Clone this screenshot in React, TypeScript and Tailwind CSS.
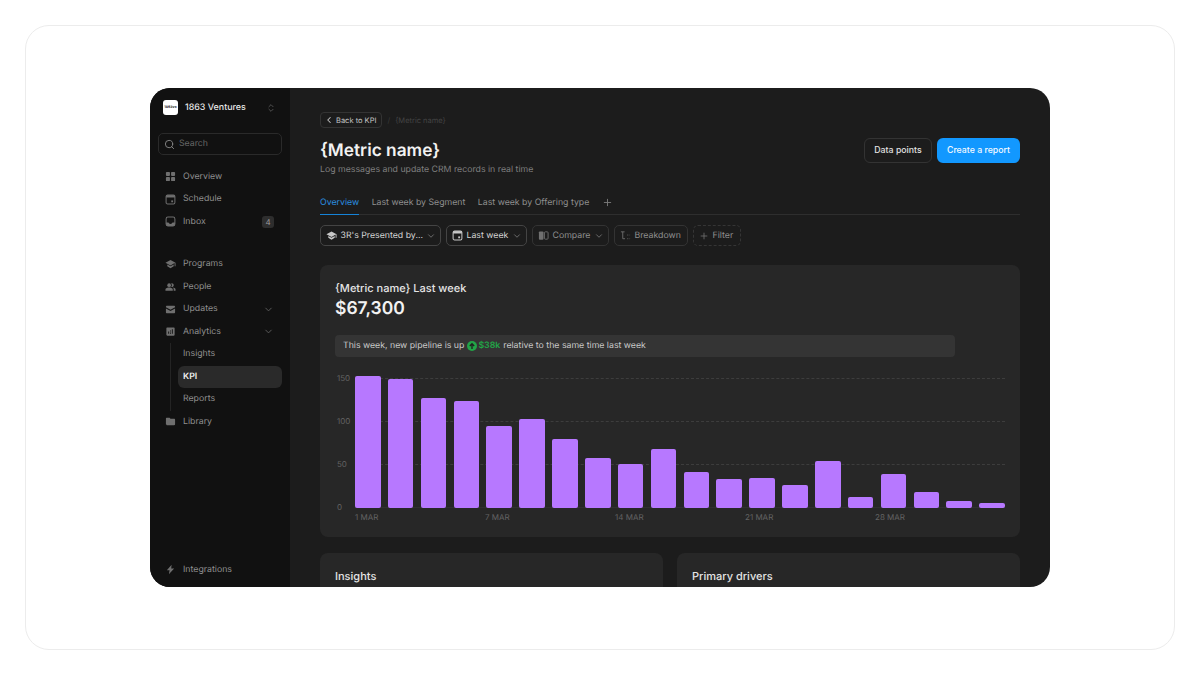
import { ChevronDown, ChevronLeft, ChevronsUpDown, Plus, Search } from "lucide-react";
import type { ReactNode } from "react";
import { MdAnalytics, MdFolder, MdPeopleAlt, MdSchool } from "react-icons/md";

const OverviewIcon = () => (
  <svg viewBox="0 0 12 12" className="h-[11px] w-[11px] fill-current">
    <rect x="1" y="1" width="4.4" height="4.4" rx="1" />
    <rect x="6.6" y="1" width="4.4" height="4.4" rx="1" />
    <rect x="1" y="6.6" width="4.4" height="4.4" rx="1" />
    <rect x="6.6" y="6.6" width="4.4" height="4.4" rx="1" />
  </svg>
);

const ScheduleIcon = () => (
  <svg viewBox="0 0 12 12" className="h-[11px] w-[11px]">
    <rect x="1.2" y="1.2" width="9.6" height="9.6" rx="1.6" fill="none" stroke="currentColor" strokeWidth="1.1" />
    <rect x="1.2" y="1.2" width="9.6" height="2.6" fill="currentColor" />
    <rect x="6.8" y="7" width="2" height="2" fill="currentColor" />
  </svg>
);

const InboxIcon = () => (
  <svg viewBox="0 0 12 12" className="h-[11px] w-[11px]">
    <rect x="1.2" y="1.2" width="9.6" height="9.6" rx="2" fill="none" stroke="currentColor" strokeWidth="1.1" />
    <path d="M1.2 7.2h2.6c.3 1 1.1 1.5 2.2 1.5s1.9-.5 2.2-1.5h2.6v1.8a1.8 1.8 0 0 1-1.8 1.8H3a1.8 1.8 0 0 1-1.8-1.8z" fill="currentColor" />
  </svg>
);

const MailIcon = () => (
  <svg viewBox="0 0 12 12" className="h-[11px] w-[11px]">
    <path d="M2.2 1.8h7.6c.7 0 1.2.5 1.2 1.2v.6L6 6.2 1 3.6V3c0-.7.5-1.2 1.2-1.2z" fill="currentColor" />
    <path d="M1 5 6 7.6 11 5v4c0 .7-.5 1.2-1.2 1.2H2.2C1.5 10.2 1 9.7 1 9z" fill="currentColor" />
  </svg>
);

const BoltIcon = () => (
  <svg viewBox="0 0 12 12" className="h-[11px] w-[11px] fill-current">
    <path d="M7.2.8 2 6.8h3L4.2 11.2 10 4.800H6.800z" />
  </svg>
);

const CompareIcon = () => (
  <svg viewBox="0 0 12 12" className="h-[11px] w-[11px]">
    <rect x="1" y="1.5" width="5" height="9" rx="1" fill="currentColor" />
    <rect x="7" y="2" width="4" height="8" rx="1" fill="none" stroke="currentColor" strokeWidth="1" />
  </svg>
);

const BreakdownIcon = () => (
  <svg viewBox="0 0 12 12" className="h-[11px] w-[11px]" fill="none" stroke="currentColor" strokeWidth="1">
    <path d="M1 2h4M3 2v7.5h2.5M8 5.5h1M8 9.5h1M10.500 5.5h.5M10.500 9.5h.5" />
  </svg>
);

const UpIcon = () => (
  <svg viewBox="0 0 12 12" className="ml-[2.5px] mr-[1.5px] h-[10px] w-[10px]">
    <circle cx="6" cy="6" r="6" fill="#22a447" />
    <path d="M6 9.5V4M3.4 6 6 3.2 8.6 6" fill="none" stroke="#1f1f1f" strokeWidth="1.6" />
  </svg>
);

const NavItem = ({ icon, label, right, active }: { icon?: ReactNode; label: string; right?: ReactNode; active?: boolean }) => (
  <div
    className={`flex h-[22.5px] items-center rounded-md text-[8.75px] ${active ? "bg-[#2a2a2a] font-semibold text-[#f0f0f0]" : "text-[#8f8f8f]"} ${icon ? "pl-[7px]" : "pl-[5px]"} pr-[8px]`}
  >
    {icon && <span className="mr-[7px] flex w-[11px] justify-center text-[#6f6f6f]">{icon}</span>}
    <span className="flex-1 pt-[1.5px]">{label}</span>
    {right}
  </div>
);

const Chevron = () => <ChevronDown size={11} className="text-[#5f5f5f]" />;

const FilterBtn = ({ icon, label, bright, dashed, width, chevron }: { icon: ReactNode; label: string; bright?: boolean; dashed?: boolean; width: string; chevron?: boolean }) => (
  <div
    className={`flex h-[21px] items-center gap-[3.5px] rounded-[5px] border pl-[5px] pr-[7px] text-[8.75px] ${width} ${dashed ? "border-dashed border-[#353535]" : bright ? "border-[#444444]" : "border-[#333333]"} ${bright ? "text-[#d5d5d5]" : "text-[#8f8f8f]"}`}
  >
    <span className={bright ? "text-[#c8c8c8]" : "text-[#707070]"}>{icon}</span>
    <span className="flex-1 whitespace-nowrap pt-[2px]">{label}</span>
    {chevron && <ChevronDown size={10} className="shrink-0 text-[#7a7a7a]" />}
  </div>
);

const bars = [131, 128, 109, 106, 81, 88, 68, 49, 43, 58, 35, 28, 29, 22, 46, 10, 33, 15, 6, 4];
const yLabels = ["150", "100", "50", "0"];
const xLabels = ["1 MAR", "7 MAR", "14 MAR", "21 MAR", "28 MAR"];

export default function App() {
  return (
    <div className="h-[675px] w-[1200px] bg-white p-[25px] font-['Inter',sans-serif] [text-rendering:geometricPrecision]">
      <div className="flex h-[625px] items-center justify-center rounded-[24px] border border-[#ececec]">
        <div className="flex h-[499px] w-[900px] overflow-hidden rounded-[20px] bg-[#1c1c1c]">
          {/* Sidebar */}
          <aside className="flex w-[140px] shrink-0 flex-col bg-[#111111] px-[8px] pb-[6px] pt-[12px]">
            <div className="flex h-[15px] items-center pl-[5px] pr-[6px]">
              <div className="flex h-[15px] w-[15px] items-center justify-center rounded-[3px] bg-white text-[3.5px] font-bold text-[#222222]">
                1863vc
              </div>
              <span className="ml-[7px] flex-1 text-[8.9px] font-medium text-[#e6e6e6]">1863 Ventures</span>
              <ChevronsUpDown size={10} className="text-[#5c5c5c]" />
            </div>
            <div className="mt-[18px] flex h-[22px] items-center gap-[4px] rounded-[5px] border border-[#2a2a2a] pl-[5px] text-[8.75px] text-[#666666]">
              <Search size={11} className="text-[#8a8a8a]" />
              <span className="pt-[2px]">Search</span>
            </div>
            <div className="mt-[10.5px]">
              <NavItem icon={<OverviewIcon />} label="Overview" />
              <NavItem icon={<ScheduleIcon />} label="Schedule" />
              <NavItem
                icon={<InboxIcon />}
                label="Inbox"
                right={
                  <span className="flex h-[12px] w-[12px] items-center justify-center rounded-[3px] bg-[#2e2e2e] text-[8px] text-[#a0a0a0]">
                    4
                  </span>
                }
              />
            </div>
            <div className="mt-[20px]">
              <NavItem icon={<MdSchool size={12} />} label="Programs" />
              <NavItem icon={<MdPeopleAlt size={12} />} label="People" />
              <NavItem icon={<MailIcon />} label="Updates" right={<Chevron />} />
              <NavItem icon={<MdAnalytics size={13} />} label="Analytics" right={<Chevron />} />
              <div className="ml-[12px] border-l border-[#242424] pl-[7px]">
                <NavItem label="Insights" />
                <NavItem label="KPI" active />
                <NavItem label="Reports" />
              </div>
              <NavItem icon={<MdFolder size={13} />} label="Library" />
            </div>
            <div className="mt-auto">
              <NavItem icon={<BoltIcon />} label="Integrations" />
            </div>
          </aside>

          {/* Main */}
          <main className="min-w-0 flex-1 px-[30px] pt-[24px]">
            <div className="flex h-[16px] items-center text-[7.5px]">
              <div className="flex h-[16px] items-center gap-[2px] rounded-[4px] border border-[#333333] pl-[3px] pr-[5px] text-[#c4c4c4]">
                <ChevronLeft size={10} strokeWidth={2.5} />
                <span className="pt-[1px]">Back to KPI</span>
              </div>
              <span className="ml-[5px] pt-[1px] text-[#3a3a3a]">/</span>
              <span className="ml-[5px] pt-[1px] text-[#444444]">{"{Metric name}"}</span>
            </div>

            <div className="mt-[10px] flex items-center justify-between">
              <div>
                <h1 className="text-[17.3px] font-semibold leading-[26px] text-[#f2f2f2]">{"{Metric name}"}</h1>
                <p className="text-[8.75px] leading-[12px] text-[#7f7f7f]">
                  Log messages and update CRM records in real time
                </p>
              </div>
              <div className="mb-[13px] flex gap-[5px] text-[8.75px] font-medium">
                <button className="h-[25px] w-[68px] rounded-[6px] border border-[#333333] text-[#e2e2e2]">Data points</button>
                <button className="h-[25px] w-[83px] rounded-[6px] bg-[#1298ff] text-[#f4f9ff]">Create a report</button>
              </div>
            </div>

            <div className="mt-[15px] flex h-[24px] items-start gap-[12.5px] border-b border-[#2e2e2e] text-[8.75px] text-[#8f8f8f]">
              <div className="h-[24px] border-b border-[#1583d8] pt-[6px] text-[#2a8fe0]">Overview</div>
              <div className="pt-[6px]">Last week by Segment</div>
              <div className="pt-[6px]">Last week by Offering type</div>
              <Plus size={11} className="mt-[6px] text-[#7a7a7a]" />
            </div>

            <div className="mt-[10px] flex gap-[5px]">
              <FilterBtn bright width="w-[121px]" chevron icon={<MdSchool size={11} />} label="3R's Presented by..." />
              <FilterBtn bright width="w-[81px]" chevron icon={<ScheduleIcon />} label="Last week" />
              <FilterBtn width="w-[77px]" chevron icon={<CompareIcon />} label="Compare" />
              <FilterBtn width="w-[74px]" icon={<BreakdownIcon />} label="Breakdown" />
              <FilterBtn dashed width="w-[48px]" icon={<Plus size={10} />} label="Filter" />
            </div>

            {/* Chart card */}
            <section className="mt-[19px] h-[272px] rounded-[8px] bg-[#272727] px-[15px] pt-[15px]">
              <div className="text-[11px] font-medium leading-[16px] text-[#e4e4e4]">{"{Metric name}"} Last week</div>
              <div className="mt-[2px] text-[17.5px] font-semibold leading-[22px] text-[#f2f2f2]">$67,300</div>
              <div className="mt-[15px] flex h-[22px] w-[620px] items-center rounded-[4px] bg-[#343434] pl-[8px] text-[8.75px] text-[#c9c9c9]">
                <span className="pt-[2px]">This week, new pipeline is up</span>
                <UpIcon />
                <span className="pt-[2px] font-semibold text-[#22a447]">$38k</span>
                <span className="ml-[3px] pt-[2px]">relative to the same time last week</span>
              </div>

              <div className="mt-[20.5px] flex">
                <div className="flex h-[130px] w-[20px] flex-col justify-between text-[8px] leading-[0] text-[#636363]">
                  {yLabels.map((label) => (
                    <div key={label} className="h-0 pl-[2px]">
                      {label}
                    </div>
                  ))}
                </div>
                <div className="relative h-[130px] w-[650px]">
                  <div className="absolute inset-0 flex flex-col justify-between">
                    {[0, 1, 2, 3].map((i) => (
                      <div key={i} className={`h-0 border-t ${i === 3 ? "border-[#303030]" : "border-dashed border-[#3d3d3d]"}`} />
                    ))}
                  </div>
                  <div className="relative flex h-[130px] items-end justify-between">
                    {bars.map((h, i) => (
                      <div key={i} className="w-[25.5px] rounded-[2px] bg-[#b778ff]" style={{ height: h + 0.5 }} />
                    ))}
                  </div>
                </div>
              </div>
              <div className="ml-[20px] mt-[4.5px] flex text-[8px] leading-[10px] text-[#636363]">
                {xLabels.map((label) => (
                  <div key={label} className="w-[130px]">
                    {label}
                  </div>
                ))}
              </div>
            </section>

            <div className="mt-[16px] flex gap-[14px]">
              <section className="h-[60px] flex-1 rounded-[8px] bg-[#272727] px-[15px] pt-[15px] text-[11px] font-medium leading-[16px] text-[#e4e4e4]">
                Insights
              </section>
              <section className="h-[60px] flex-1 rounded-[8px] bg-[#272727] px-[15px] pt-[15px] text-[11px] font-medium leading-[16px] text-[#e4e4e4]">
                Primary drivers
              </section>
            </div>
          </main>
        </div>
      </div>
    </div>
  );
}
